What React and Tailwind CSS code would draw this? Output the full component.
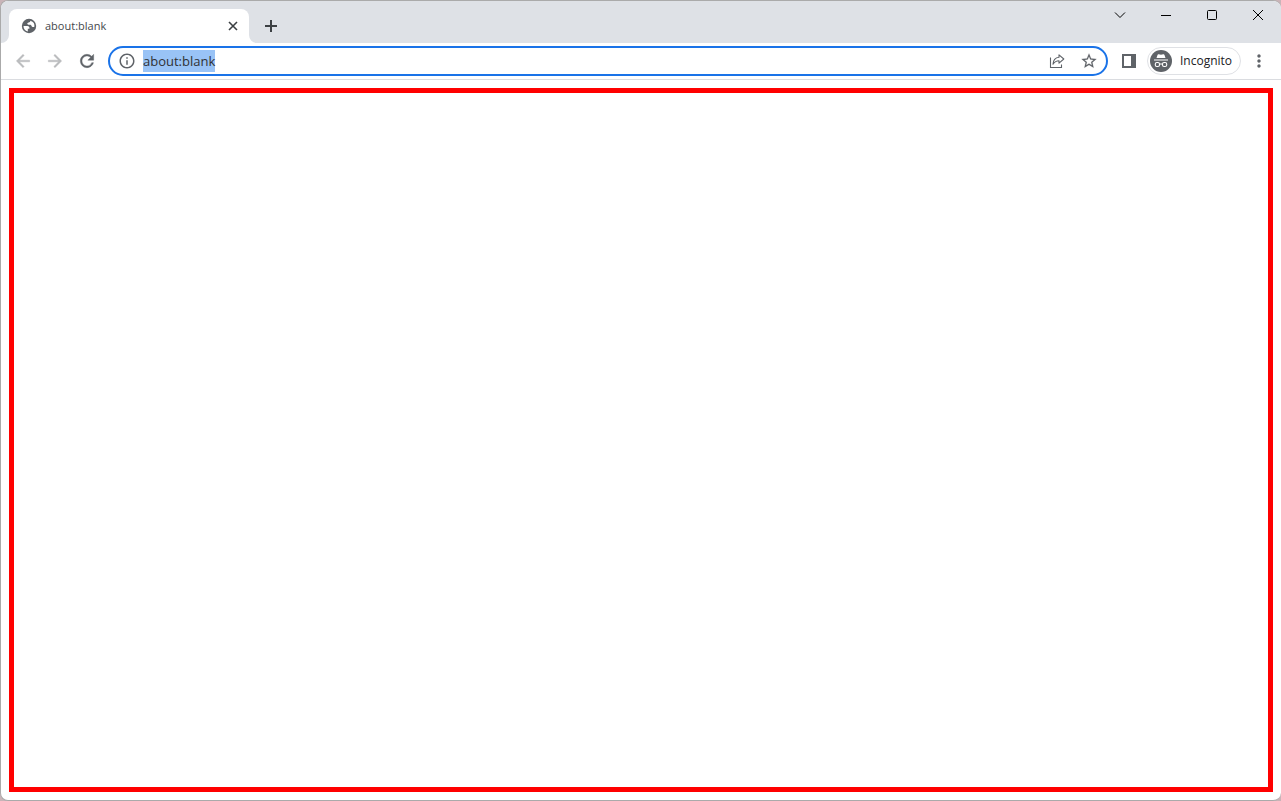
import { useEffect, useRef } from "react";
import { MdMoreVert, MdInfoOutline } from "react-icons/md";

function GlobeIcon() {
  return (
    <svg viewBox="0 0 16 16" className="size-4 shrink-0" aria-hidden="true">
      <circle cx="8" cy="8" r="7.2" fill="#5f6368" />
      <path
        d="M2.5 8h3.9c1.2 0 2 .8 2 1.8v1H6.8v2.6A5.6 5.6 0 0 1 2.5 8z"
        fill="#fff"
      />
      <path
        d="M9.4 2.7c-.1 1.1-.8 1.6-1.8 1.7-.9.1-1.3.6-1.3 1.2 0 .7.5 1.1 1.2 1.1h1.4c1 0 1.5.6 1.7 1.3.2.8.8 1.1 1.4 1.1h1.3A5.6 5.6 0 0 0 9.4 2.7z"
        fill="#fff"
      />
    </svg>
  );
}

function ToolIcon({ children }) {
  return (
    <svg
      viewBox="0 0 24 24"
      className="size-5 shrink-0"
      fill="currentColor"
      stroke="currentColor"
      strokeWidth="0.5"
      aria-hidden="true"
    >
      {children}
    </svg>
  );
}

function StarIcon() {
  return (
    <svg viewBox="0 0 24 24" className="size-[18px] shrink-0" fill="currentColor" stroke="currentColor" strokeWidth="0.2" aria-hidden="true">
      <path d="m22 9.24-7.19-.62L12 2 9.19 8.63 2 9.24l5.46 4.73L5.82 21 12 17.27 18.18 21l-1.63-7.03L22 9.24zM12 15.4l-3.76 2.27 1-4.28-3.32-2.88 4.38-.38L12 6.1l1.71 4.04 4.38.38-3.32 2.88 1 4.28L12 15.4z" />
    </svg>
  );
}

function ShareIcon() {
  return (
    <svg viewBox="0 0 16 16" className="size-4 shrink-0" fill="none" stroke="#5f6368" strokeWidth="1.1" aria-hidden="true">
      <path d="M1.5 4.5v10h11v-3" />
      <path d="M10 1.8 14.8 6 10 10.2V7.8C7.4 7.8 5.6 8.8 4 11.2 4.2 7.2 6.2 4.6 10 4.2z" strokeLinejoin="round" />
    </svg>
  );
}

function IncognitoIcon() {
  return (
    <svg viewBox="0 0 22 22" className="size-[22px] shrink-0" aria-hidden="true">
      <circle cx="11" cy="11" r="11" fill="#5f6368" />
      <path d="M6.5 8 7.5 4.9c.2-.6.7-.9 1.3-.7l2.2.6 2.2-.6c.6-.2 1.1.1 1.3.7l1 3.1z" fill="#fff" />
      <path d="M4 9.4h14v1.2H4z" fill="#fff" />
      <g fill="none" stroke="#fff" strokeWidth="1.1">
        <rect x="5.3" y="12.5" width="4.2" height="4" rx="1.6" />
        <rect x="12.5" y="12.5" width="4.2" height="4" rx="1.6" />
        <path d="M9.5 14h3" />
      </g>
    </svg>
  );
}

function TabFlare({ side }) {
  return (
    <svg viewBox="0 0 8 8" className="size-2 shrink-0" aria-hidden="true">
      <path d={side === "left" ? "M8 0v8H0a8 8 0 0 0 8-8z" : "M0 0v8h8a8 8 0 0 1-8-8z"} fill="#fff" />
    </svg>
  );
}

function ToolButton({ label, disabled, children }) {
  return (
    <button
      type="button"
      aria-label={label}
      disabled={disabled}
      className="flex size-7 shrink-0 items-center justify-center rounded-full text-[#5f6368] disabled:text-[#babcbe]"
    >
      {children}
    </button>
  );
}

function CaptionButton({ label, children }) {
  return (
    <button type="button" aria-label={label} className="flex h-7 w-[46px] items-center justify-center">
      <svg viewBox="0 0 12 12" className="size-3" fill="none" stroke="#000" strokeWidth="1" aria-hidden="true">
        {children}
      </svg>
    </button>
  );
}

export default function App() {
  const address = useRef(null);

  useEffect(() => {
    address.current.focus();
    address.current.select();
  }, []);

  return (
    <div className="min-h-screen bg-[#c9b4b8] flex flex-col font-['Open_Sans',sans-serif]">
      <div className="flex grow flex-col overflow-hidden rounded-lg border border-r-0 border-[#aaa] bg-white">
        <header className="flex h-[42px] items-end bg-[#dee1e6]">
          <TabFlare side="left" />
          <div className="flex h-[34px] w-60 items-center rounded-t-lg bg-white pr-2 pl-3">
            <GlobeIcon />
            <span className="grow pl-2 text-[11px] leading-4 text-[#45484c]">about:blank</span>
            <button type="button" aria-label="Close tab" className="flex size-4 items-center justify-center">
              <svg viewBox="0 0 10 10" className="size-[10px]" stroke="#3c4043" strokeWidth="1.6" aria-hidden="true">
                <path d="m1 1 8 8M9 1 1 9" />
              </svg>
            </button>
          </div>
          <TabFlare side="right" />
          <button type="button" aria-label="New tab" className="flex h-[34px] w-7 items-center justify-center">
            <svg viewBox="0 0 12 12" className="size-3" stroke="#3c4043" strokeWidth="2" aria-hidden="true">
              <path d="M6 0v12M0 6h12" />
            </svg>
          </button>
          <div className="ml-auto flex self-start">
            <CaptionButton label="Search tabs">
              <path d="m1 3.5 5 5 5-5" />
            </CaptionButton>
            <CaptionButton label="Minimize">
              <path d="M1 6.5h10" />
            </CaptionButton>
            <CaptionButton label="Maximize">
              <rect x="1.5" y="1.5" width="9" height="9" rx="1" />
            </CaptionButton>
            <CaptionButton label="Close">
              <path d="m1 1 10 10M11 1 1 11" />
            </CaptionButton>
          </div>
        </header>

        <div className="flex h-[37px] items-center gap-1 border-b border-[#dadce0] px-2">
          <ToolButton label="Back" disabled>
            <ToolIcon>
              <path d="M20 11H7.83l5.59-5.59L12 4l-8 8 8 8 1.41-1.41L7.83 13H20v-2z" />
            </ToolIcon>
          </ToolButton>
          <ToolButton label="Forward" disabled>
            <ToolIcon>
              <path d="m12 4-1.41 1.41L16.17 11H4v2h12.17l-5.58 5.59L12 20l8-8z" />
            </ToolIcon>
          </ToolButton>
          <ToolButton label="Reload">
            <ToolIcon>
              <path d="M17.65 6.35A7.958 7.958 0 0 0 12 4c-4.42 0-7.99 3.58-7.99 8s3.57 8 7.99 8c3.73 0 6.84-2.55 7.73-6h-2.08A5.99 5.99 0 0 1 12 18c-3.31 0-6-2.69-6-6s2.69-6 6-6c1.66 0 3.14.69 4.22 1.78L13 11h7V4l-2.35 2.35z" />
            </ToolIcon>
          </ToolButton>

          <div className="mx-[3px] flex h-[30px] grow items-center rounded-full border-2 border-[#1a73e8] bg-white px-2">
            <MdInfoOutline className="size-[18px] shrink-0 text-[#5f6368]" />
            <input
              ref={address}
              type="text"
              aria-label="Address"
              defaultValue="about:blank"
              className="ml-[7px] h-[22px] min-w-0 grow text-[13px] leading-[22px] text-[#303134] outline-none selection:bg-[#99c3f6] selection:text-[#303134]"
            />
            <div className="flex items-center gap-[15px]">
              <button type="button" aria-label="Share this page">
                <ShareIcon />
              </button>
              <button type="button" aria-label="Bookmark this tab" className="text-[#5f6368]">
                <StarIcon />
              </button>
            </div>
          </div>

          <ToolButton label="Side panel">
            <svg viewBox="0 0 14 14" className="size-[14px]" aria-hidden="true">
              <path d="M0 0h14v14H0zM2 2v10h7V2z" fill="currentColor" fillRule="evenodd" />
            </svg>
          </ToolButton>
          <button
            type="button"
            className="flex h-7 w-[94px] shrink-0 items-center gap-2 rounded-full border border-[#dfe1e5] pl-[2px] text-[12px] text-[#202124]"
          >
            <IncognitoIcon />
            Incognito
          </button>
          <ToolButton label="Menu">
            <MdMoreVert className="size-5" />
          </ToolButton>
        </div>

        <main className="m-2 grow border-[5px] border-[#ff0000] bg-white" />
      </div>
    </div>
  );
}
